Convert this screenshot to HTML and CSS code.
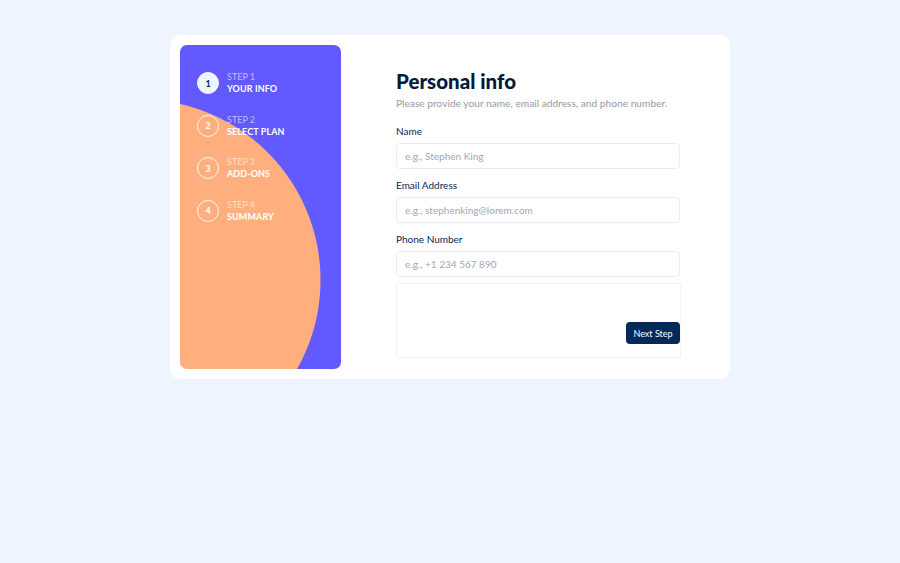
FILE: index.html
```html
<!DOCTYPE html>
<html lang="en">
<head>
<meta charset="utf-8">
<title>Multi-step form</title>
<link rel="stylesheet" href="styles.css">
</head>
<body>
<main class="card">
  <aside class="sidebar">
    <ol class="steps">
      <li class="step active"><span class="num">1</span><div class="step-text"><span class="step-label">STEP 1</span><span class="step-name">YOUR INFO</span></div></li>
      <li class="step"><span class="num">2</span><div class="step-text"><span class="step-label">STEP 2</span><span class="step-name">SELECT PLAN</span></div></li>
      <li class="step"><span class="num">3</span><div class="step-text"><span class="step-label">STEP 3</span><span class="step-name">ADD-ONS</span></div></li>
      <li class="step"><span class="num">4</span><div class="step-text"><span class="step-label">STEP 4</span><span class="step-name">SUMMARY</span></div></li>
    </ol>
  </aside>
  <section class="content">
    <h1 class="title">Personal info</h1>
    <p class="subtitle">Please provide your name, email address, and phone number.</p>
    <form class="form">
      <label class="field"><span class="field-label">Name</span><input class="input" type="text" placeholder="e.g., Stephen King"></label>
      <label class="field"><span class="field-label">Email Address</span><input class="input" type="email" placeholder="e.g., stephenking@lorem.com"></label>
      <label class="field"><span class="field-label">Phone Number</span><input class="input" type="tel" placeholder="e.g., +1 234 567 890"></label>
      <div class="footer"><button class="next" type="button">Next Step</button></div>
    </form>
  </section>
</main>
</body>
</html>
```
FILE: styles.css
```css
* { box-sizing: border-box; }
html, body { margin: 0; padding: 0; }
body {
  background: #eff5ff;
  font-family: "Lato", "Open Sans", sans-serif;
  color: #022959;
  padding-top: 35px;
}
.card {
  width: 560px;
  height: 344px;
  margin: 0 auto;
  background: #fff;
  border-radius: 10px;
  padding: 10px;
  display: flex;
}
.sidebar {
  width: 161px;
  height: 324px;
  border-radius: 7px;
  background:
    radial-gradient(circle at -40px 235px, #ffaf7e 180px, rgba(255,175,126,0) 181px),
    #6259ff;
  padding: 27px 0 0 17px;
}
.steps { list-style: none; margin: 0; padding: 0; display: flex; flex-direction: column; gap: 20.5px; }
.step { display: flex; align-items: center; gap: 8px; height: 22px; }
.num {
  width: 22px; height: 22px;
  border: 1px solid rgba(255,255,255,0.85);
  border-radius: 50%;
  display: flex; align-items: center; justify-content: center;
  color: #fff;
  font-size: 9px;
  font-weight: 700;
}
.step.active .num { background: #eef5ff; border-color: #eef5ff; color: #022959; }
.step-text { display: flex; flex-direction: column; line-height: 12px; }
.step-label { font-size: 9px; color: rgba(255,255,255,0.6); }
.step-name { font-size: 9px; font-weight: 700; color: #fff; letter-spacing: 0.1px; }
.content { margin-left: 55px; width: 285px; padding-top: 23px; }
.title { margin: 0; font-size: 20.5px; font-weight: 900; line-height: 26px; color: #021a38; }
.subtitle { margin: 2px 0 0; font-size: 10.2px; color: #9699aa; line-height: 14px; }
.form { margin-top: 14px; display: flex; flex-direction: column; }
.field { display: flex; flex-direction: column; margin-bottom: 9px; }
.field-label { font-size: 10px; line-height: 14px; color: #022959; margin-bottom: 5px; }
.input {
  width: 284px; height: 26px;
  border: 1px solid #e9ecf1;
  border-radius: 4px;
  padding: 0 8px;
  font-family: inherit;
  font-size: 10px;
  color: #022959;
  outline: none;
}
.input::placeholder { color: #a3a6b4; }
.field:last-of-type { margin-bottom: 6px; }
.footer {
  width: 285px; height: 75px;
  border: 1px solid #f2f3f6;
  border-radius: 2px;
  display: flex; align-items: flex-end; justify-content: flex-end;
  padding: 0 0 13px 0;
}
.next {
  width: 54px; height: 22px;
  background: #022959;
  color: #fff;
  border: 0;
  border-radius: 4px;
  font-family: inherit;
  font-size: 9px;
}
```
